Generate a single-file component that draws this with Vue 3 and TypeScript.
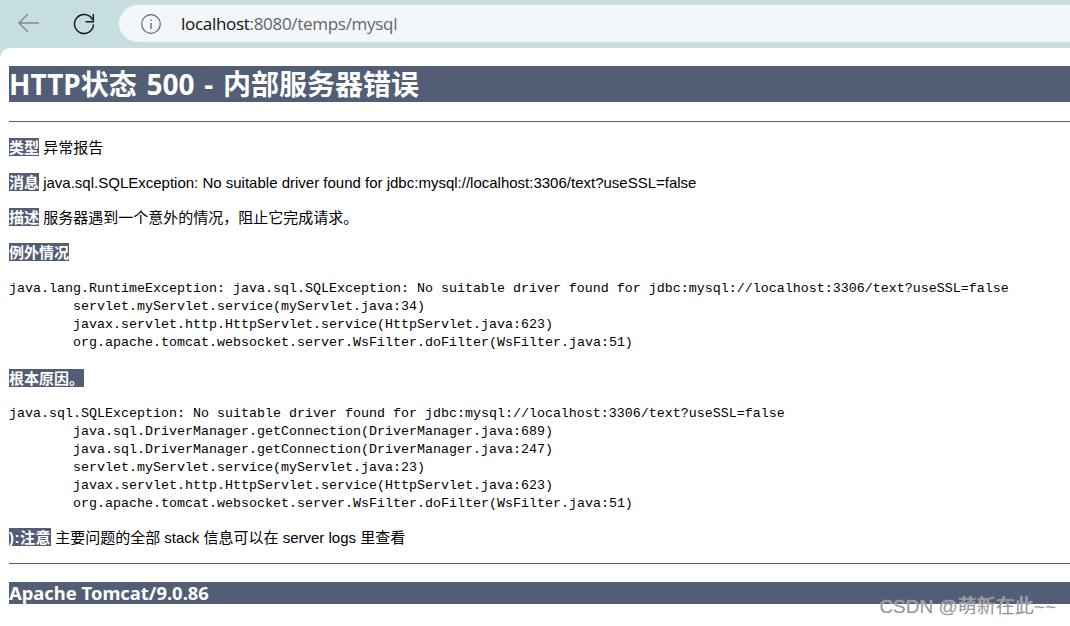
<script setup lang="ts">
const rootTrace = [
  'java.lang.RuntimeException: java.sql.SQLException: No suitable driver found for jdbc:mysql://localhost:3306/text?useSSL=false',
  '\tservlet.myServlet.service(myServlet.java:34)',
  '\tjavax.servlet.http.HttpServlet.service(HttpServlet.java:623)',
  '\torg.apache.tomcat.websocket.server.WsFilter.doFilter(WsFilter.java:51)',
].join('\n')

const causeTrace = [
  'java.sql.SQLException: No suitable driver found for jdbc:mysql://localhost:3306/text?useSSL=false',
  '\tjava.sql.DriverManager.getConnection(DriverManager.java:689)',
  '\tjava.sql.DriverManager.getConnection(DriverManager.java:247)',
  '\tservlet.myServlet.service(myServlet.java:23)',
  '\tjavax.servlet.http.HttpServlet.service(HttpServlet.java:623)',
  '\torg.apache.tomcat.websocket.server.WsFilter.doFilter(WsFilter.java:51)',
].join('\n')
</script>

<template>
  <div class="window">
    <header class="toolbar">
      <svg class="nav back" width="24" height="24" viewBox="0 0 24 24">
        <path d="M22 11H2.5M11 2l-9 9 9 9" fill="none" stroke="#7d8a90" stroke-width="1.4" />
      </svg>
      <svg class="nav reload" width="24" height="24" viewBox="0 0 24 24">
        <path d="M20.5 7.7A9.5 9.5 0 1 0 21.5 12.5" fill="none" stroke="#1c1c1c" stroke-width="1.5" />
        <path d="M21.3 2v7.7h-7.8" fill="none" stroke="#1c1c1c" stroke-width="1.5" />
      </svg>
      <div class="address">
        <svg width="22" height="22" viewBox="0 0 22 22">
          <circle cx="11" cy="11" r="9.3" fill="none" stroke="#5f6669" stroke-width="1.2" />
          <path d="M11 10v6M11 6.4v1.6" fill="none" stroke="#5f6669" stroke-width="1.3" />
        </svg>
        <span class="url"><span class="host">localhost</span>:8080/temps/mysql</span>
      </div>
    </header>

    <main class="page">
      <h1>HTTP状态 500 - 内部服务器错误</h1>
      <hr class="first" />
      <p><b>类型</b> 异常报告</p>
      <p><b>消息</b> java.sql.SQLException: No suitable driver found for jdbc:mysql://localhost:3306/text?useSSL=false</p>
      <p><b>描述</b> 服务器遇到一个意外的情况，阻止它完成请求。</p>
      <p><b>例外情况</b></p>
      <pre>{{ rootTrace }}</pre>
      <p><b>根本原因。</b></p>
      <pre class="cause">{{ causeTrace }}</pre>
      <p><b class="note">):注意</b> 主要问题的全部 stack 信息可以在 server logs 里查看</p>
      <hr class="last" />
      <h3>Apache Tomcat/9.0.86</h3>
      <span class="watermark">CSDN @萌新在此~~</span>
    </main>
  </div>
</template>

<style scoped>
.window {
  width: 1070px;
  height: 626px;
  overflow: hidden;
  background: #c6dde2;
  font-family: "Liberation Sans", "Noto Sans CJK SC", sans-serif;
  color: #000;
}

.toolbar {
  height: 48px;
  display: flex;
  align-items: flex-start;
  padding-top: 5px;
  box-sizing: border-box;
}

.nav {
  flex: none;
  margin-top: 7px;
}

.back {
  margin-left: 17px;
}

.reload {
  margin-left: 31px;
}

.address {
  flex: 1;
  height: 37px;
  margin-left: 23px;
  padding-left: 21px;
  display: flex;
  align-items: center;
  gap: 19px;
  background: #f3f7f9;
  border-radius: 19px 0 0 19px;
}

.url {
  font-size: 17px;
  color: #5f6669;
  font-family: "Open Sans", "Noto Sans", sans-serif;
  letter-spacing: -0.3px;
}

.host {
  color: #111;
}

.page {
  position: relative;
  height: 578px;
  padding: 18px 0 0 9px;
  box-sizing: border-box;
  background: #fff;
  border-top-left-radius: 10px;
}

h1 {
  margin: 0;
  height: 36px;
  line-height: 36px;
  font-family: "Noto Sans", "Noto Sans CJK SC", sans-serif;
  font-size: 28px;
  font-weight: 700;
  word-spacing: 2.5px;
  color: #fff;
  background: #525d76;
  white-space: nowrap;
}

h3 {
  margin: 0;
  height: 22px;
  line-height: 22px;
  font-family: "Noto Sans", "Noto Sans CJK SC", sans-serif;
  font-size: 18.4px;
  font-weight: 700;
  color: #fff;
  background: #525d76;
}

hr {
  height: 1px;
  margin: 0;
  border: 0;
  background: #525d76;
}

hr.first {
  margin: 19px 0 16px;
}

hr.last {
  margin: 15px 0 18px;
}

p {
  margin: 0 0 17px;
  height: 18px;
  line-height: 19px;
  font-size: 15px;
  white-space: nowrap;
}

b {
  display: inline-block;
  height: 18px;
  color: #fff;
  background: #525d76;
  font-weight: 700;
  vertical-align: top;
}

.note {
  letter-spacing: 0.5px;
}

pre {
  margin: 0 0 17px;
  padding-top: 2px;
  font-family: "Liberation Mono", "Noto Sans CJK SC", monospace;
  font-size: 13.33px;
  line-height: 18px;
  tab-size: 8;
}

pre.cause {
  padding-top: 1px;
  margin-bottom: 15px;
}

.watermark {
  position: absolute;
  right: 14px;
  bottom: 9px;
  font-size: 19px;
  line-height: 20px;
  color: #949494;
  text-shadow: 0 0 1px #fff;
}
</style>

<style>
html,
body {
  margin: 0;
  overflow: hidden;
}
</style>
